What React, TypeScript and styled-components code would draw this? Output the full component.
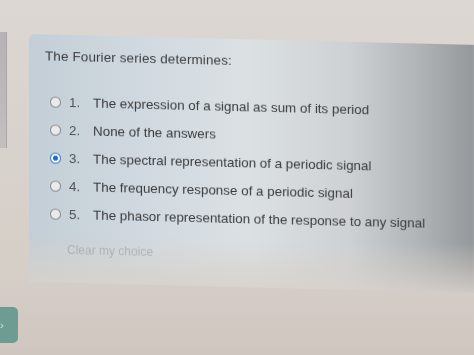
import styled, { createGlobalStyle } from 'styled-components';

const GlobalStyle = createGlobalStyle`
  html, body {
    margin: 0;
    padding: 0;
    width: 474px;
    height: 355px;
    overflow: hidden;
    background: linear-gradient(180deg, #dcd7d2 0%, #d8d2cc 40%, #d6cfc8 75%, #cfc6c0 100%);
    font-family: 'Liberation Sans', Arial, sans-serif;
  }
`;

const Page = styled.div`
  display: flex;
  width: 474px;
  height: 355px;
  overflow: hidden;
`;

const SideRail = styled.div`
  width: 29px;
  flex-shrink: 0;
  display: flex;
  flex-direction: column;
  padding-top: 32px;
  box-sizing: border-box;
`;

const RailStrip = styled.div`
  width: 6px;
  height: 116px;
  background: linear-gradient(180deg, #b7b2b6 0%, #bdb8bb 60%, #c4bfbf 100%);
  border-right: 1px solid #a9a5a9;
`;

const NavButton = styled.div`
  margin-top: 159px;
  width: 18px;
  height: 36px;
  border-radius: 0 5px 5px 0;
  background: #6f9c92;
  display: flex;
  align-items: center;
  color: #d6e4df;
  font-size: 11px;
  overflow: hidden;
`;

const Card = styled.section`
  flex: 1;
  margin-top: 34px;
  height: 248px;
  border-radius: 6px 0 0 0;
  transform: skewY(1.4deg);
  transform-origin: top left;
  background:
    linear-gradient(180deg, rgba(214, 207, 200, 0) 0%, rgba(214, 207, 200, 0) 80%, rgba(216, 209, 202, 0.85) 100%),
    linear-gradient(90deg, #c3ced6 0%, #d3dbe1 30%, #dbe0e3 50%, #cdd1d4 72%, #afb3b6 88%, #95989b 100%);
  padding: 14px 0 0 16px;
  box-sizing: border-box;
  filter: blur(0.25px);
`;

const Question = styled.div`
  font-size: 13.5px;
  color: #3c3d3f;
  letter-spacing: 0.1px;
  margin-bottom: 29px;
`;

const Options = styled.div`
  display: flex;
  flex-direction: column;
  gap: 10px;
  padding-left: 5px;
`;

const Option = styled.label`
  display: flex;
  align-items: center;
  height: 18px;
  font-size: 13.4px;
  color: #3a3b3d;
`;

const Radio = styled.span<{ $checked?: boolean }>`
  width: 11px;
  height: 11px;
  border-radius: 50%;
  box-sizing: border-box;
  flex-shrink: 0;
  border: 1.5px solid ${(p) => (p.$checked ? '#2b7bd8' : '#8a8a8c')};
  background: ${(p) =>
    p.$checked
      ? 'radial-gradient(circle, #1f6fd0 0 2.6px, #ffffff 2.8px)'
      : '#ebebeb'};
  margin-right: 8px;
`;

const Num = styled.span`
  width: 24px;
  color: #505256;
`;

const ClearChoice = styled.div`
  margin: 20px 0 0 22px;
  font-size: 12px;
  color: #aeb3b6;
`;

const options = [
  'The expression of a signal as sum of its period',
  'None of the answers',
  'The spectral representation of a periodic signal',
  'The frequency response of a periodic signal',
  'The phasor representation of the response to any signal',
];

export default function App() {
  return (
    <Page>
      <GlobalStyle />
      <SideRail>
        <RailStrip />
        <NavButton>›</NavButton>
      </SideRail>
      <Card>
        <Question>The Fourier series determines:</Question>
        <Options>
          {options.map((text, i) => (
            <Option key={i}>
              <Radio $checked={i === 2} />
              <Num>{i + 1}.</Num>
              {text}
            </Option>
          ))}
        </Options>
        <ClearChoice>Clear my choice</ClearChoice>
      </Card>
    </Page>
  );
}
